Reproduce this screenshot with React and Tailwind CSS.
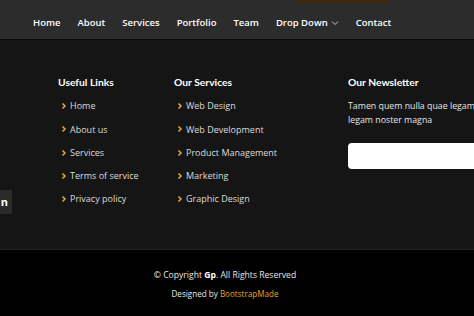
import React from 'react';

const usefulLinks = ['Home', 'About us', 'Services', 'Terms of service', 'Privacy policy'];
const services = ['Web Design', 'Web Development', 'Product Management', 'Marketing', 'Graphic Design'];
const navItems = ['Home', 'About', 'Services', 'Portfolio', 'Team'];

const Chevron = () => (
  <svg width="6" height="8" viewBox="0 0 6 8" className="mr-[3px] shrink-0">
    <path d="M1.5 1.5 L4 4 L1.5 6.5" fill="none" stroke="#e5a83a" strokeWidth="1.5" />
  </svg>
);

const LinkList = ({ items }) => (
  <ul className="mt-[8px] flex flex-col gap-[7.3px]">
    {items.map((item) => (
      <li key={item} className="flex h-[16px] items-center whitespace-nowrap pl-[3px] text-[9px] text-[#dcdcdc]">
        <Chevron />
        {item}
      </li>
    ))}
  </ul>
);

const Heading = ({ children }) => (
  <h4 className="whitespace-nowrap text-[10.3px] font-bold leading-[16px] text-white" style={{ fontFamily: '"Lato", sans-serif' }}>
    {children}
  </h4>
);

export default function App() {
  return (
    <div className="h-[316px] w-[474px] overflow-hidden bg-black" style={{ fontFamily: '"Open Sans", sans-serif' }}>
      {/* header */}
      <div className="relative h-[39px] bg-[#2c2c2c]">
        <div className="absolute left-[295px] top-0 h-[3px] w-[93px] bg-[#3b2a12]" />
        <nav className="flex h-full items-center gap-[17px] pl-[33px] pt-[7px] text-[9.5px] font-semibold text-white">
          {navItems.map((n) => (
            <span key={n}>{n}</span>
          ))}
          <span className="flex items-center">
            Drop Down
            <svg width="8" height="6" viewBox="0 0 8 6" className="ml-[3px]">
              <path d="M1 1.5 L4 4.5 L7 1.5" fill="none" stroke="#ccc" strokeWidth="1" />
            </svg>
          </span>
          <span>Contact</span>
        </nav>
      </div>
      <div className="h-[1px] bg-[#0a0a0a]" />

      {/* footer top */}
      <div className="relative h-[210px] border-b border-[#222] bg-[#151515]">
        <div className="absolute left-0 top-[150px] flex h-[24px] w-[12px] items-center justify-end bg-[#2a2a2a] pr-[4px] text-[11px] font-bold text-white">
          n
        </div>
        <div className="flex pt-[34px]">
          <div className="ml-[58px] w-[116px] shrink-0">
            <Heading>Useful Links</Heading>
            <LinkList items={usefulLinks} />
          </div>
          <div className="w-[174px] shrink-0">
            <Heading>Our Services</Heading>
            <LinkList items={services} />
          </div>
          <div className="shrink-0">
            <Heading>Our Newsletter</Heading>
            <p className="mt-[10px] whitespace-nowrap text-[8.8px] leading-[13.5px] text-[#e6e6e6]">
              Tamen quem nulla quae legam multos aute
              <br />
              legam noster magna
            </p>
            <div className="mt-[16px] h-[26px] w-[160px] rounded-[4px] bg-white" />
          </div>
        </div>
      </div>

      {/* footer bottom */}
      <div className="flex flex-col items-center pr-[24px] pt-[18px] text-[8.6px] text-[#e8e8e8]">
        <p className="leading-[14px]">
          © Copyright <strong className="font-bold text-white">Gp</strong>. All Rights Reserved
        </p>
        <p className="mt-[5px] text-[8.1px] leading-[14px]">
          Designed by <span className="text-[#e3a52b]">BootstrapMade</span>
        </p>
      </div>
    </div>
  );
}
